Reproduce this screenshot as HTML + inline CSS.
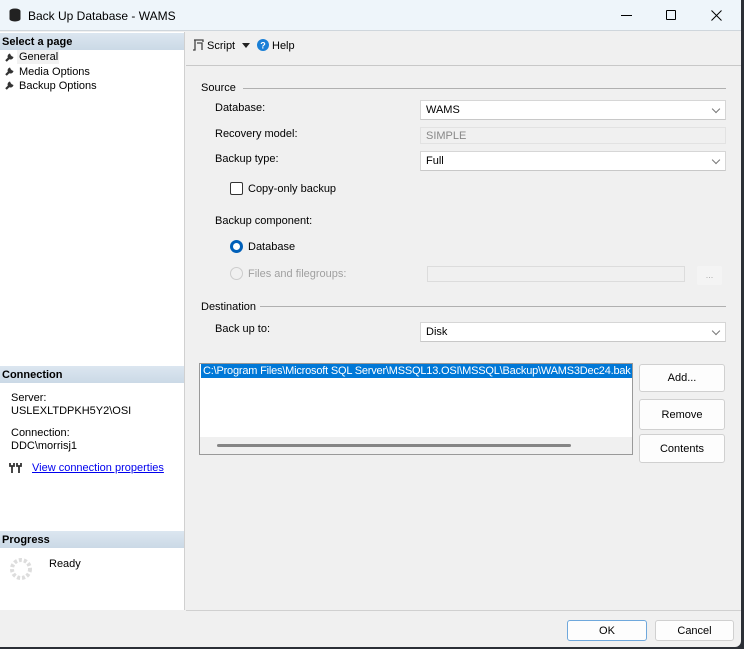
<!DOCTYPE html>
<html><head><style>
*{margin:0;padding:0;box-sizing:border-box}
body{width:744px;height:649px;background:#2b2f36;font-family:"Liberation Sans",sans-serif;font-size:11px;color:#000;position:relative;overflow:hidden}
.win{position:absolute;left:0;top:0;width:741px;height:647px;background:#f0f0f0;border-radius:0 0 6px 0;overflow:hidden}
.a{position:absolute}
.title{left:0;top:0;width:741px;height:31px;background:#eef5fa;border-bottom:1px solid #cfd6dc}
.left{left:0;top:32px;width:185px;height:578px;background:#fff;border-right:1px solid #d0d0d0}
.hdr{left:0;width:184px;height:17px;background:linear-gradient(#dce6f0,#cbd9e6);font-weight:bold;font-size:11px;padding:3px 2px 0}
.combo{background:#fff;border:1px solid #d6d6d6;border-bottom-color:#c8c8c8;height:20px;padding:3px 5px;font-size:11px}
.combo:after{content:"";position:absolute;right:6px;top:5px;width:5px;height:5px;border-right:1px solid #777;border-bottom:1px solid #777;transform:rotate(45deg)}
.btn{background:#fdfdfd;border:1px solid #d0d0d0;border-radius:3px;text-align:center;font-size:11px}
.lbl{font-size:11px}
.line{height:1px;background:#b0b0b0}
.r{position:absolute;left:0;top:1px;width:744px;height:649px}
</style></head><body>
<div class="win">
<div class="a title">
 <svg class="a" style="left:9px;top:8px" width="12" height="14"><ellipse cx="6" cy="3" rx="5.5" ry="2.5" fill="#222"/><rect x="0.5" y="3" width="11" height="8" fill="#222"/><ellipse cx="6" cy="11" rx="5.5" ry="2.5" fill="#222"/></svg>
 <div class="a" style="left:28px;top:9px;font-size:12px">Back Up Database - WAMS</div>
 <div class="a" style="left:621px;top:15px;width:11px;height:1px;background:#000"></div>
 <div class="a" style="left:666px;top:10px;width:10px;height:10px;border:1px solid #000;border-radius:1px"></div>
 <svg class="a" style="left:711px;top:10px" width="11" height="11"><path d="M0.5 0.5L10.5 10.5M10.5 0.5L0.5 10.5" stroke="#000" stroke-width="1"/></svg>
</div>
<div class="a left">
 <div class="a hdr" style="top:1px">Select a page</div>
 <div class="a" style="left:17px;top:18px;width:42px;height:14px;background:#f2f2f2"></div>
 <svg class="a" style="left:5px;top:20px" width="10" height="10"><path d="M1 9L6 4" stroke="#333" stroke-width="2.2"/><path d="M5 1.5A3 3 0 1 0 8.5 5L6.8 4.2L5.8 3.2Z" fill="#333"/></svg>
 <div class="a" style="left:19px;top:19px">General</div>
 <svg class="a" style="left:5px;top:34px" width="10" height="10"><path d="M1 9L6 4" stroke="#333" stroke-width="2.2"/><path d="M5 1.5A3 3 0 1 0 8.5 5L6.8 4.2L5.8 3.2Z" fill="#333"/></svg>
 <div class="a" style="left:19px;top:34px">Media Options</div>
 <svg class="a" style="left:5px;top:48px" width="10" height="10"><path d="M1 9L6 4" stroke="#333" stroke-width="2.2"/><path d="M5 1.5A3 3 0 1 0 8.5 5L6.8 4.2L5.8 3.2Z" fill="#333"/></svg>
 <div class="a" style="left:19px;top:48px">Backup Options</div>
 <div class="a hdr" style="top:334px">Connection</div>
 <div class="a" style="left:11px;top:360px">Server:</div>
 <div class="a" style="left:11px;top:373px">USLEXLTDPKH5Y2\OSI</div>
 <div class="a" style="left:11px;top:395px">Connection:</div>
 <div class="a" style="left:11px;top:408px">DDC\morrisj1</div>
 <svg class="a" style="left:9px;top:430px" width="14" height="12"><path d="M1 1v3h4v-3M3 4v7M8 1v3h4v-3M10 4v7" stroke="#333" stroke-width="1.8" fill="none"/></svg>
 <div class="a" style="left:32px;top:430px;color:#0000ee;text-decoration:underline">View connection properties</div>
 <div class="a hdr" style="top:499px">Progress</div>
 <svg class="a" style="left:9px;top:525px" width="24" height="24"><circle cx="12" cy="12" r="9" fill="none" stroke="#ddd" stroke-width="4" stroke-dasharray="3 2"/></svg>
 <div class="a" style="left:49px;top:526px">Ready</div>
</div>
<div class="a" style="left:186px;top:32px;width:555px;height:34px;border-bottom:1px solid #c8c8c8"></div>
<svg class="a" style="left:192px;top:39px" width="12" height="12"><path d="M2 1h9v2M3 1v10h-2M5 4h5v7" stroke="#444" fill="none" stroke-width="1.3"/></svg>
<div class="a" style="left:207px;top:40px">Script</div>
<div class="a" style="left:242px;top:43px;border:4px solid transparent;border-top:5px solid #222"></div>
<svg class="a" style="left:257px;top:39px" width="12" height="12"><circle cx="6" cy="6" r="6" fill="#1a7fd6"/><text x="6" y="9.5" font-size="9" font-weight="bold" fill="#fff" text-anchor="middle" font-family="Liberation Sans">?</text></svg>
<div class="a" style="left:272px;top:40px">Help</div>

<div class="r">
<div class="a lbl" style="left:201px;top:81px">Source</div>
<div class="a line" style="left:243px;top:87px;width:483px"></div>
<div class="a lbl" style="left:215px;top:101px">Database:</div>
<div class="a combo" style="left:420px;top:99px;width:306px">WAMS</div>
<div class="a lbl" style="left:215px;top:127px">Recovery model:</div>
<div class="a" style="left:420px;top:126px;width:306px;height:17px;border:1px solid #e2e2e2;padding:2px 5px;color:#888">SIMPLE</div>
<div class="a lbl" style="left:215px;top:152px">Backup type:</div>
<div class="a combo" style="left:420px;top:150px;width:306px">Full</div>
<div class="a" style="left:230px;top:181px;width:13px;height:13px;border:1px solid #333;border-radius:2px;background:#fff"></div>
<div class="a lbl" style="left:248px;top:182px">Copy-only backup</div>
<div class="a lbl" style="left:215px;top:214px">Backup component:</div>
<div class="a" style="left:230px;top:239px;width:13px;height:13px;border-radius:50%;background:#fff;border:3.5px solid #005fb8"></div>
<div class="a lbl" style="left:248px;top:240px">Database</div>
<div class="a" style="left:230px;top:266px;width:13px;height:13px;border-radius:50%;border:1px solid #ccc"></div>
<div class="a lbl" style="left:248px;top:267px;color:#a0a0a0">Files and filegroups:</div>
<div class="a" style="left:427px;top:265px;width:258px;height:16px;border:1px solid #dcdcdc"></div>
<div class="a" style="left:697px;top:265px;width:25px;height:19px;background:#f4f4f4;border-radius:2px;color:#aaa;text-align:center;font-size:9px;line-height:19px">...</div>
<div class="a lbl" style="left:201px;top:300px">Destination</div>
<div class="a line" style="left:260px;top:305px;width:466px"></div>
<div class="a lbl" style="left:215px;top:322px">Back up to:</div>
<div class="a combo" style="left:420px;top:321px;width:306px">Disk</div>
</div>

<div class="a" style="left:199px;top:363px;width:434px;height:92px;background:#fff;border:1px solid #999">
 <div class="a" style="left:1px;top:0;width:431px;height:14px;background:#0078d7;color:#fff;padding:0 2px;font-size:11px;line-height:14px;white-space:nowrap;overflow:hidden;letter-spacing:-0.2px">C:\Program Files\Microsoft SQL Server\MSSQL13.OSI\MSSQL\Backup\WAMS3Dec24.bak</div>
 <div class="a" style="left:0;top:73px;width:432px;height:17px;background:#f0f0f0"></div>
 <div class="a" style="left:17px;top:80px;width:354px;height:3px;background:#858585;border-radius:2px"></div>
</div>
<div class="a btn" style="left:639px;top:364px;width:86px;height:28px;line-height:27px">Add...</div>
<div class="a btn" style="left:639px;top:399px;width:86px;height:31px;line-height:30px">Remove</div>
<div class="a btn" style="left:639px;top:434px;width:86px;height:29px;line-height:28px">Contents</div>

<div class="a" style="left:186px;top:610px;width:555px;height:1px;background:#d0d0d0"></div>
<div class="a btn" style="left:567px;top:620px;width:80px;height:21px;line-height:20px;border:1px solid #6fa8dc">OK</div>
<div class="a btn" style="left:655px;top:620px;width:79px;height:21px;line-height:20px">Cancel</div>
</div>
</body></html>
